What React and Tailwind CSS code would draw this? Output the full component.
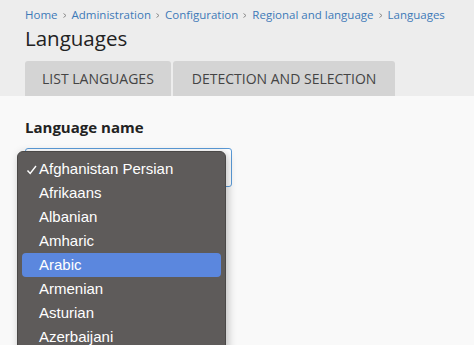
const crumbs = ["Home", "Administration", "Configuration", "Regional and language", "Languages"];

const options = [
    "Afghanistan Persian",
    "Afrikaans",
    "Albanian",
    "Amharic",
    "Arabic",
    "Armenian",
    "Asturian",
    "Azerbaijani",
    "Basque",
];

function Crumbs() {
    return (
        <div className="flex items-center text-[11.5px] leading-[16px] text-[#3d7ab8]">
            {crumbs.map((c, i) => (
                <span key={c} className="flex items-center">
                    {i > 0 && (
                        <svg width="14" height="16" viewBox="0 0 14 16" className="text-[#8a8a8a]">
                            <path d="M5.5 6.5 L8 8.5 L5.5 10.5" fill="none" stroke="currentColor" strokeWidth="1" />
                        </svg>
                    )}
                    <span>{c}</span>
                </span>
            ))}
        </div>
    );
}

function Menu() {
    return (
        <div className="absolute left-[-9px] top-[2px] w-[209px] h-[210px] bg-[#5e5b5a] rounded-[6px] pt-[5px] shadow-[2px_2px_8px_rgba(0,0,0,0.25)] border border-[#4a4847] font-['Liberation_Sans',Arial,sans-serif] text-[15px] text-white">
            {options.map((o, i) => (
                <div
                    key={o}
                    className={
                        i === 4
                            ? "relative h-[24px] leading-[24px] mx-[4px] pl-[17px] rounded-[4px] bg-[#5b87de]"
                            : "relative h-[24px] leading-[24px] pl-[21px]"
                    }
                >
                    {i === 0 && (
                        <svg width="12" height="12" viewBox="0 0 12 12" className="absolute left-[8px] top-[7px]">
                            <path d="M1.5 6.5 L4.2 9.5 L10 2" fill="none" stroke="white" strokeWidth="1.4" />
                        </svg>
                    )}
                    {o}
                </div>
            ))}
        </div>
    );
}

export default function App() {
    return (
        <div className="w-[474px] h-[345px] overflow-hidden bg-[#f9f9f9] font-['Open_Sans',sans-serif]">
            <div className="bg-[#ededed] px-[25px] pt-[7px]">
                <Crumbs />
                <h1 className="mt-[2px] text-[20.5px] leading-[26px] text-[#222]">Languages</h1>
                <div className="mt-[10px] flex gap-[2px]">
                    <div className="h-[35px] px-[17px] flex items-center rounded-t-[3px] bg-[#d4d4d4] text-[14px] text-[#444]">
                        LIST LANGUAGES
                    </div>
                    <div className="h-[35px] px-[19px] flex items-center rounded-t-[3px] bg-[#d4d4d4] text-[14px] text-[#444]">
                        DETECTION AND SELECTION
                    </div>
                </div>
            </div>
            <div className="px-[25px] pt-[21px]">
                <div className="text-[15px] leading-[20px] font-bold text-[#222]">Language name</div>
                <div className="relative mt-[11px] w-[207px] h-[39px] rounded-[3px] border border-[#5b9bd8] bg-white">
                    <span className="absolute right-[5px] top-[15px] w-[2px] h-[3px] bg-black" />
                    <Menu />
                </div>
            </div>
        </div>
    );
}
